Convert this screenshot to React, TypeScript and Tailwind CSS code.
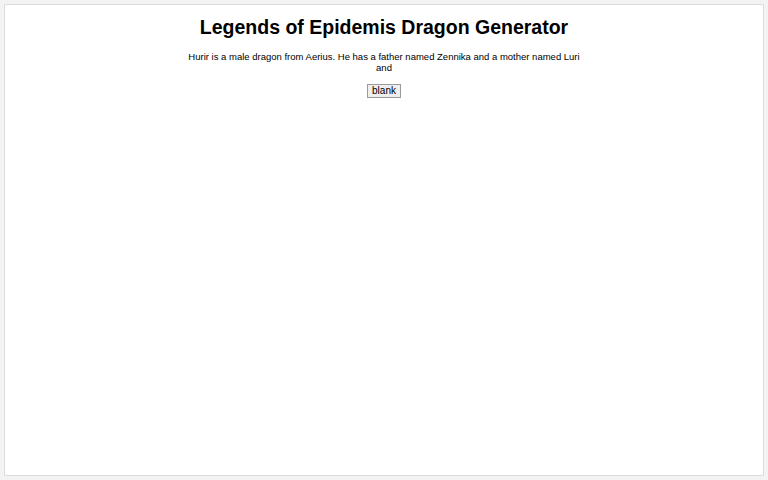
export default function App() {
  return (
    <div className="h-[480px] w-[768px] bg-[#f3f3f3] p-[4px]" style={{ fontFamily: '"Liberation Sans", Arial, sans-serif' }}>
      <div className="flex h-[472px] flex-col items-center border border-[#dcdcdc] bg-white">
        <h1 className="mt-[11px] text-[19.5px] font-bold leading-[22px] text-black">
          Legends of Epidemis Dragon Generator
        </h1>
        <p className="mt-[13px] w-[400px] text-center text-[9.5px] leading-[11px] text-black">
          Hurir is a male dragon from Aerius. He has a father named Zennika and a mother named Luri and
        </p>
        <button className="mt-[11px] border border-[#9a9a9a] bg-[#efefef] px-[4px] text-[10px] leading-[12px] text-black">
          blank
        </button>
      </div>
    </div>
  );
}
